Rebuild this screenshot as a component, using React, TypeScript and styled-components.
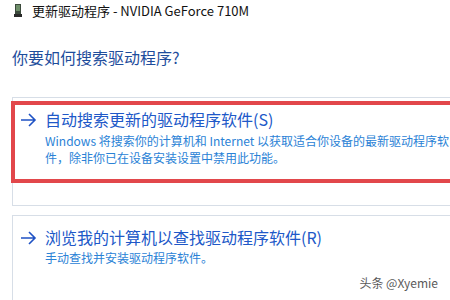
import React from "react"
import styled, { createGlobalStyle } from "styled-components"

const GlobalStyle = createGlobalStyle`
  html, body {
    margin: 0;
    padding: 0;
    background: #fff;
  }
  body {
    font-family: "Noto Sans CJK SC", "Liberation Sans", sans-serif;
    overflow: hidden;
  }
`

const Window = styled.div`
  position: relative;
  width: 450px;
  height: 300px;
  overflow: hidden;
  background: #fff;
`

const TitleBar = styled.div`
  display: flex;
  align-items: center;
  gap: 10px;
  height: 18px;
  padding: 1px 0 0 14px;
  font-size: 13px;
  color: #111;
  white-space: nowrap;
`

const Body = styled.div`
  padding-left: 12px;
`

const Heading = styled.h1`
  margin: 27px 0 0;
  font-size: 16px;
  font-weight: normal;
  line-height: 22px;
  color: #1e4d9c;
`

const Card = styled.div<{ $gap: number; $height?: number }>`
  position: relative;
  margin-top: ${(p) => p.$gap}px;
  width: 460px;
  min-height: ${(p) => p.$height ?? 0}px;
  box-sizing: border-box;
  border: 1px solid #d7dee7;
  background: #fff;
  display: grid;
  grid-template-columns: 25px 1fr;
  align-items: start;
  padding: 12px 0 0 7px;
`

// red annotation frame drawn on top of the first card
const Highlight = styled.span`
  position: absolute;
  top: 3px;
  left: -2px;
  right: -10px;
  height: 82px;
  border: 4px solid #e2474b;
  box-sizing: border-box;
  pointer-events: none;
`

const Arrow = styled.svg`
  width: 17px;
  height: 14px;
  margin-top: 3px;
  color: #1f52c4;
`

const Option = styled.div`
  display: flex;
  flex-direction: column;
`

const OptionTitle = styled.div`
  font-size: 16px;
  line-height: 19px;
  color: #2058c8;
  white-space: nowrap;
`

const OptionDesc = styled.div<{ $top: number }>`
  margin-top: ${(p) => p.$top}px;
  font-size: 12px;
  line-height: 17px;
  color: #2a82d6;
  white-space: nowrap;
`

const Watermark = styled.div`
  position: absolute;
  right: 12px;
  bottom: 9px;
  font-size: 12px;
  color: #5a5a5a;
  text-shadow: 0 0 2px #fff;
`

const DeviceIcon = () => (
  <svg width="8" height="13" viewBox="0 0 8 13">
    <rect x="1" y="0" width="6" height="10" fill="#3c4a3c" />
    <rect x="2" y="1" width="4" height="6" fill="#6f8f6a" />
    <rect x="0" y="10" width="8" height="3" fill="#2a2a2a" />
  </svg>
)

const ArrowIcon = () => (
  <Arrow viewBox="0 0 17 14">
    <path d="M1 7h14M9 1l6 6-6 6" fill="none" stroke="currentColor" strokeWidth="1.6" />
  </Arrow>
)

export default function App() {
  return (
    <Window>
      <GlobalStyle />
      <TitleBar>
        <DeviceIcon />
        <span>更新驱动程序 - NVIDIA GeForce 710M</span>
      </TitleBar>
      <Body>
        <Heading>你要如何搜索驱动程序?</Heading>
        <Card $gap={29} $height={109}>
          <Highlight />
          <ArrowIcon />
          <Option>
            <OptionTitle>自动搜索更新的驱动程序软件(S)</OptionTitle>
            <OptionDesc $top={3}>
              Windows 将搜索你的计算机和 Internet 以获取适合你设备的最新驱动程序软
              <br />
              件，除非你已在设备安装设置中禁用此功能。
            </OptionDesc>
          </Option>
        </Card>
        <Card $gap={9} $height={100}>
          <ArrowIcon />
          <Option>
            <OptionTitle>浏览我的计算机以查找驱动程序软件(R)</OptionTitle>
            <OptionDesc $top={2}>手动查找并安装驱动程序软件。</OptionDesc>
          </Option>
        </Card>
      </Body>
      <Watermark>头条 @Xyemie</Watermark>
    </Window>
  )
}
